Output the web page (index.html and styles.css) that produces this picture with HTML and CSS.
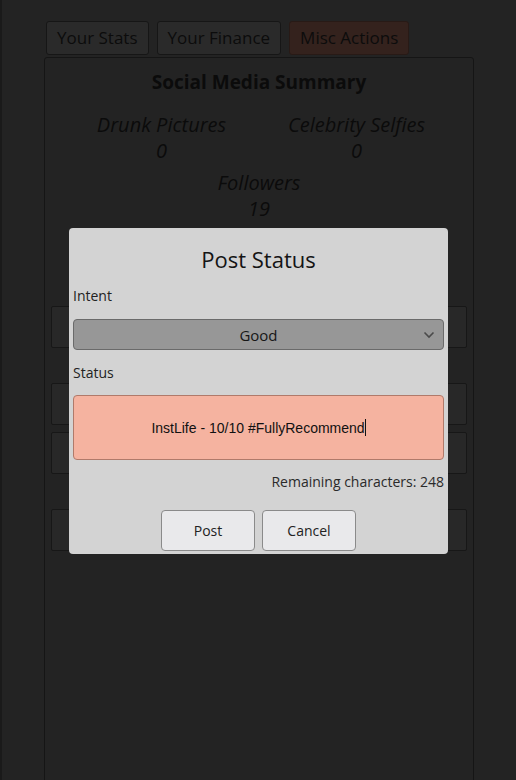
FILE: index.html
```html
<!DOCTYPE html>
<html lang="en">
<head>
<meta charset="utf-8">
<title>Social Media</title>
<link rel="stylesheet" href="styles.css">
</head>
<body>
<div class="page">
  <nav class="tabs">
    <div class="tab">Your Stats</div>
    <div class="tab">Your Finance</div>
    <div class="tab tab-active">Misc Actions</div>
  </nav>
  <section class="panel">
    <h2 class="panel-title">Social Media Summary</h2>
    <div class="stats">
      <div class="stat"><div>Drunk Pictures</div><div>0</div></div>
      <div class="stat"><div>Celebrity Selfies</div><div>0</div></div>
    </div>
    <div class="stat stat-single"><div>Followers</div><div>19</div></div>
    <div class="actions">
      <div class="action-row"></div>
      <div class="action-row gap-top"></div>
      <div class="action-row small-top"></div>
      <div class="action-row gap-top"></div>
    </div>
  </section>
</div>

<div class="modal">
  <h3 class="modal-title">Post Status</h3>
  <label class="field-label">Intent</label>
  <div class="select">
    <span>Good</span>
    <svg class="chevron" width="12" height="8" viewBox="0 0 12 8"><path d="M1.5 1.5 L6 6 L10.5 1.5" fill="none" stroke="#4a4a4a" stroke-width="1.6"/></svg>
  </div>
  <label class="field-label">Status</label>
  <div class="textarea"><span>InstLife - 10/10 #FullyRecommend</span><span class="caret"></span></div>
  <div class="remaining">Remaining characters: 248</div>
  <div class="modal-buttons">
    <button class="btn">Post</button>
    <button class="btn">Cancel</button>
  </div>
</div>
</body>
</html>
```

FILE: styles.css
```css
html, body {
  margin: 0;
  padding: 0;
  height: 100%;
}
body {
  background: #232323;
  font-family: "Open Sans", "DejaVu Sans", sans-serif;
  overflow: hidden;
}
.page {
  border-left: 2px solid #1a1a1a;
  min-height: 780px;
  box-sizing: border-box;
  padding: 21px 0 0 42px;
}
.tabs {
  display: flex;
  gap: 8px;
  margin-left: 2px;
}
.tab {
  font-size: 17px;
  color: #0c0c0c;
  background: #2a2a2a;
  border: 1px solid #161616;
  border-radius: 3px;
  height: 34px;
  box-sizing: border-box;
  padding: 0 10px;
  line-height: 32px;
}
.tab-active {
  background: #34221d;
  border-color: #281a16;
}
.panel {
  margin-top: 2px;
  width: 430px;
  box-sizing: border-box;
  min-height: 760px;
  border: 1px solid #151515;
  border-radius: 3px;
  padding: 0 6px;
  color: #0b0b0b;
}
.panel-title {
  margin: 0;
  padding-top: 11px;
  font-size: 19px;
  font-weight: 700;
  line-height: 26px;
  text-align: center;
}
.stats {
  display: grid;
  grid-template-columns: 1fr 1fr;
  margin: 17px 13px 0;
}
.stat {
  text-align: center;
  font-style: italic;
  font-size: 20px;
  line-height: 26px;
}
.stat-single {
  margin-top: 6px;
}
.actions {
  margin-top: 84px;
}
.action-row {
  height: 42px;
  box-sizing: border-box;
  border: 1px solid #171717;
  background: #282828;
  border-radius: 2px;
}
.gap-top { margin-top: 35px; }
.small-top { margin-top: 7px; }

.modal {
  position: fixed;
  left: 69px;
  top: 228px;
  width: 379px;
  height: 326px;
  box-sizing: border-box;
  background: #d3d3d3;
  border-radius: 4px;
  padding: 0 4px;
  color: #1b1b1b;
}
.modal-title {
  margin: 16px 0 0;
  font-size: 22px;
  font-weight: 400;
  line-height: 30px;
  text-align: center;
  color: #141414;
}
.field-label {
  display: block;
  font-size: 14px;
  line-height: 19px;
  margin-top: 13px;
  color: #222;
}
.modal-title + .field-label {
  margin-top: 12px;
}
.select {
  margin-top: 14px;
  height: 31px;
  box-sizing: border-box;
  border: 1px solid #6a6a6a;
  border-radius: 4px;
  background: #979797;
  display: flex;
  align-items: center;
  justify-content: center;
  position: relative;
  font-size: 15px;
  color: #161616;
}
.chevron {
  position: absolute;
  right: 8px;
  top: 11px;
}
.textarea {
  margin-top: 13px;
  height: 65px;
  box-sizing: border-box;
  border: 1px solid #b07a6a;
  border-radius: 4px;
  background: #f5b3a0;
  display: flex;
  align-items: center;
  justify-content: center;
  font-family: "Liberation Sans", Arial, sans-serif;
  font-size: 14px;
  color: #111;
}
.caret {
  display: inline-block;
  width: 1px;
  height: 17px;
  background: #111;
}
.remaining {
  margin-top: 12px;
  text-align: right;
  font-size: 14px;
  line-height: 19px;
  color: #2a2a2a;
}
.modal-buttons {
  margin-top: 19px;
  display: flex;
  justify-content: center;
  gap: 7px;
}
.btn {
  width: 94px;
  height: 41px;
  box-sizing: border-box;
  background: #e9e9eb;
  border: 1px solid #8a8a8a;
  border-radius: 4px;
  font-family: "Open Sans", sans-serif;
  font-size: 14px;
  color: #222;
}
```
